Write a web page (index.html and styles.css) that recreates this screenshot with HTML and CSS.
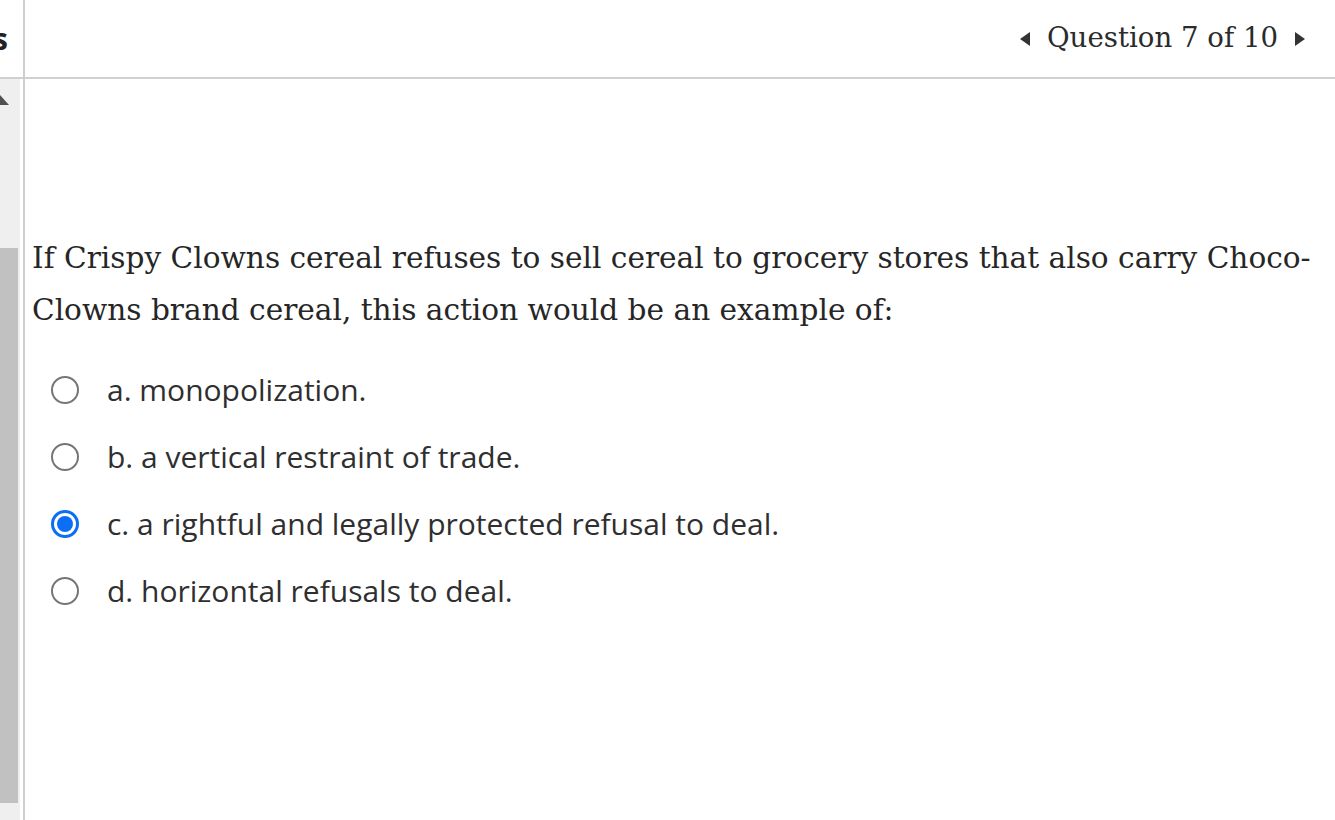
FILE: index.html
```html
<!DOCTYPE html>
<html>
<head>
<meta charset="utf-8">
<link rel="stylesheet" href="styles.css">
</head>
<body>
<div class="app">
  <aside class="side">
    <div class="side-head"><span class="side-title">Questions</span></div>
    <div class="track">
      <div class="arrow-up"></div>
      <div class="thumb"></div>
    </div>
  </aside>
  <main class="main">
    <header class="top">
      <span class="tri tri-left"></span>
      <span class="qnum">Question 7 of 10</span>
      <span class="tri tri-right"></span>
    </header>
    <section class="question">
      <p class="stem">If Crispy Clowns cereal refuses to sell cereal to grocery stores that also carry Choco-Clowns brand cereal, this action would be an example of:</p>
      <ul class="options">
        <li class="opt"><span class="radio"></span><span class="label">a. monopolization.</span></li>
        <li class="opt"><span class="radio"></span><span class="label">b. a vertical restraint of trade.</span></li>
        <li class="opt"><span class="radio checked"></span><span class="label">c. a rightful and legally protected refusal to deal.</span></li>
        <li class="opt"><span class="radio"></span><span class="label">d. horizontal refusals to deal.</span></li>
      </ul>
    </section>
  </main>
</div>
</body>
</html>
```

FILE: styles.css
```css
html, body {
  margin: 0;
  padding: 0;
  background: #ffffff;
  height: 100%;
  overflow: hidden;
}
.app {
  display: flex;
  height: 820px;
}
.side {
  width: 23px;
  flex: none;
  border-right: 2px solid #cfcfcf;
  display: flex;
  flex-direction: column;
}
.side-head {
  border-bottom: 2px solid #d0d0d0;
  overflow: hidden;
  display: flex;
  justify-content: flex-end;
  align-items: center;
  box-sizing: border-box;
  height: 79px;
}
.side-title {
  font-family: "Open Sans", sans-serif;
  font-weight: 700;
  font-size: 30px;
  color: #222;
  margin-right: 15px;
  white-space: nowrap;
}
.track {
  flex: 1;
  width: 20px;
  background: #efefef;
  display: flex;
  flex-direction: column;
}
.arrow-up {
  width: 0;
  height: 0;
  border-left: 10px solid transparent;
  border-right: 10px solid transparent;
  border-bottom: 11px solid #505050;
  margin: 15px 0 0 -11px;
}
.thumb {
  width: 18px;
  height: 555px;
  margin-top: 143px;
  background: #c1c1c1;
}
.main {
  flex: 1;
  display: flex;
  flex-direction: column;
}
.top {
  height: 77px;
  border-bottom: 2px solid #d0d0d0;
  display: flex;
  justify-content: flex-end;
  align-items: center;
  padding-right: 30px;
  gap: 17px;
}
.qnum {
  font-family: "DejaVu Serif", serif;
  font-size: 27.6px;
  color: #2b2b2b;
  margin-top: -2px;
}
.tri {
  width: 0;
  height: 0;
  border-top: 7px solid transparent;
  border-bottom: 7px solid transparent;
}
.tri-left { border-right: 10px solid #333; }
.tri-right { border-left: 10px solid #333; }
.question {
  padding: 153px 0 0 7px;
}
.stem {
  margin: 0;
  font-family: "DejaVu Serif", serif;
  font-size: 29.6px;
  line-height: 52px;
  color: #262626;
}
.options {
  list-style: none;
  margin: 20px 0 0 0;
  padding: 0;
}
.opt {
  display: flex;
  align-items: center;
  height: 67px;
}
.radio {
  width: 24px;
  height: 24px;
  border: 2px solid #767676;
  border-radius: 50%;
  margin-left: 19px;
  margin-right: 28px;
  flex: none;
  box-sizing: content-box;
  position: relative;
}
.radio.checked {
  border: 3px solid #0b6ff5;
  width: 22px;
  height: 22px;
}
.radio.checked::after {
  content: "";
  position: absolute;
  left: 3px;
  top: 3px;
  width: 16px;
  height: 16px;
  border-radius: 50%;
  background: #0b6ff5;
}
.label {
  font-family: "Open Sans", sans-serif;
  font-size: 30px;
  color: #2f2f2f;
}
```
